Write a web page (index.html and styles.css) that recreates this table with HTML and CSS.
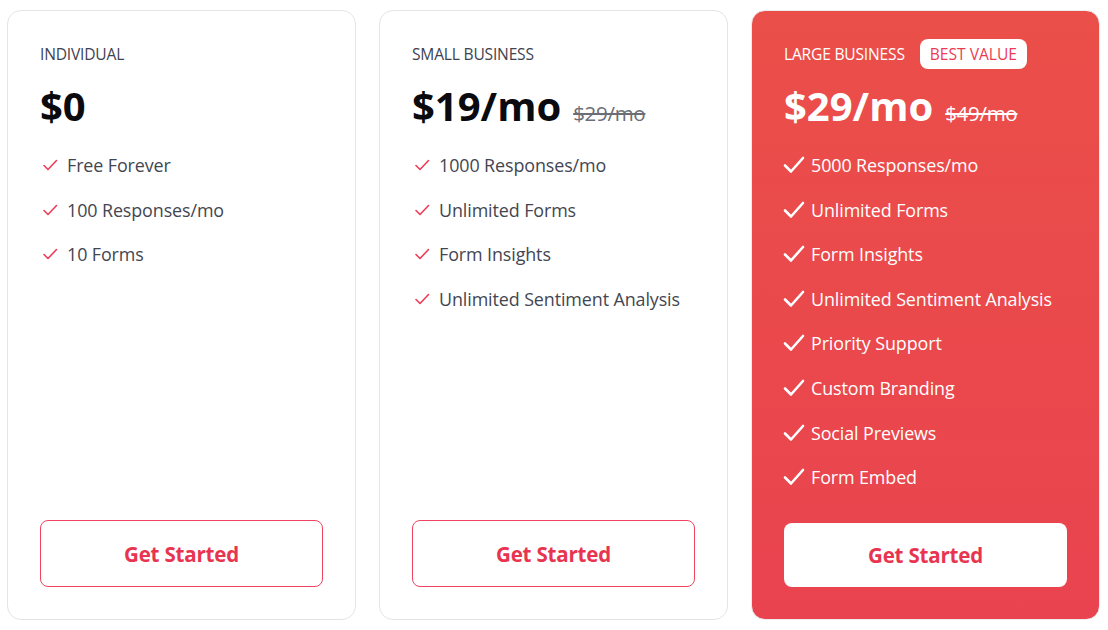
FILE: index.html
```html
<!DOCTYPE html>
<html>
<head>
<meta charset="utf-8">
<link rel="stylesheet" href="styles.css">
</head>
<body>
<div class="plans">
  <div class="card">
    <div class="head"><span class="name">INDIVIDUAL</span></div>
    <div class="price"><span class="now">$0</span></div>
    <ul class="features">
      <li><svg class="chk" viewBox="0 0 16 16"><path d="M2 8.5 L6 12.5 L14.5 3.5"/></svg>Free Forever</li>
      <li><svg class="chk" viewBox="0 0 16 16"><path d="M2 8.5 L6 12.5 L14.5 3.5"/></svg>100 Responses/mo</li>
      <li><svg class="chk" viewBox="0 0 16 16"><path d="M2 8.5 L6 12.5 L14.5 3.5"/></svg>10 Forms</li>
    </ul>
    <button class="btn">Get Started</button>
  </div>
  <div class="card">
    <div class="head"><span class="name">SMALL BUSINESS</span></div>
    <div class="price"><span class="now">$19/mo</span><s class="was">$29/mo</s></div>
    <ul class="features">
      <li><svg class="chk" viewBox="0 0 16 16"><path d="M2 8.5 L6 12.5 L14.5 3.5"/></svg>1000 Responses/mo</li>
      <li><svg class="chk" viewBox="0 0 16 16"><path d="M2 8.5 L6 12.5 L14.5 3.5"/></svg>Unlimited Forms</li>
      <li><svg class="chk" viewBox="0 0 16 16"><path d="M2 8.5 L6 12.5 L14.5 3.5"/></svg>Form Insights</li>
      <li><svg class="chk" viewBox="0 0 16 16"><path d="M2 8.5 L6 12.5 L14.5 3.5"/></svg>Unlimited Sentiment Analysis</li>
    </ul>
    <button class="btn">Get Started</button>
  </div>
  <div class="card featured">
    <div class="head"><span class="name">LARGE BUSINESS</span><span class="badge">BEST VALUE</span></div>
    <div class="price"><span class="now">$29/mo</span><s class="was">$49/mo</s></div>
    <ul class="features">
      <li><svg class="chk" viewBox="0 0 22 22"><path d="M2 11.5 L8 17.5 L20 4"/></svg>5000 Responses/mo</li>
      <li><svg class="chk" viewBox="0 0 22 22"><path d="M2 11.5 L8 17.5 L20 4"/></svg>Unlimited Forms</li>
      <li><svg class="chk" viewBox="0 0 22 22"><path d="M2 11.5 L8 17.5 L20 4"/></svg>Form Insights</li>
      <li><svg class="chk" viewBox="0 0 22 22"><path d="M2 11.5 L8 17.5 L20 4"/></svg>Unlimited Sentiment Analysis</li>
      <li><svg class="chk" viewBox="0 0 22 22"><path d="M2 11.5 L8 17.5 L20 4"/></svg>Priority Support</li>
      <li><svg class="chk" viewBox="0 0 22 22"><path d="M2 11.5 L8 17.5 L20 4"/></svg>Custom Branding</li>
      <li><svg class="chk" viewBox="0 0 22 22"><path d="M2 11.5 L8 17.5 L20 4"/></svg>Social Previews</li>
      <li><svg class="chk" viewBox="0 0 22 22"><path d="M2 11.5 L8 17.5 L20 4"/></svg>Form Embed</li>
    </ul>
    <button class="btn">Get Started</button>
  </div>
</div>
</body>
</html>
```
FILE: styles.css
```css
* { box-sizing: border-box; }
html, body { margin: 0; background: #ffffff; }
body {
  padding: 10px 0 0 7px;
  font-family: "Open Sans", "Noto Sans", sans-serif;
  color: #3c3f48;
}
.plans {
  display: grid;
  grid-template-columns: 349px 349px 349px;
  gap: 23px;
}
.card {
  height: 610px;
  border: 1px solid #e4e4e6;
  border-radius: 14px;
  background: #ffffff;
  padding: 28px 32px 32px 32px;
  display: flex;
  flex-direction: column;
}
.head {
  height: 30px;
  display: flex;
  align-items: center;
  gap: 15px;
}
.name {
  font-size: 15.6px;
  letter-spacing: -0.2px;
  color: #3f4350;
}
.badge {
  background: #fff;
  color: #ec3a55;
  font-size: 15.6px;
  height: 30px;
  line-height: 30px;
  padding: 0 10px;
  border-radius: 8px;
}
.price {
  margin-top: 15px;
  height: 44px;
  display: flex;
  align-items: baseline;
  gap: 12px;
}
.now {
  font-size: 40px;
  line-height: 44px;
  font-weight: 700;
  color: #0b0b0f;
  letter-spacing: 0;
}
.was {
  font-size: 20.5px;
  color: #6b6e76;
  letter-spacing: -0.3px;
}
.features {
  list-style: none;
  margin: 25px 0 0 0;
  padding: 0;
  display: flex;
  flex-direction: column;
  gap: 20.6px;
}
.features li {
  display: flex;
  align-items: center;
  height: 24px;
  font-size: 17.9px;
  color: #434651;
  letter-spacing: -0.1px;
}
.chk {
  width: 16px;
  height: 16px;
  margin: 0 9px 0 2px;
  fill: none;
  stroke: #ee3c58;
  stroke-width: 1.6;
  stroke-linecap: round;
  stroke-linejoin: round;
  flex: none;
}
.btn {
  margin-top: auto;
  height: 67px;
  width: 100%;
  border: 1.5px solid #ee4460;
  border-radius: 8px;
  background: #fff;
  color: #e8344f;
  font-family: inherit;
  font-size: 20.5px;
  font-weight: 700;
  letter-spacing: -0.2px;
}
.featured {
  background: linear-gradient(180deg, #eb4f49 0%, #e9434f 100%);
  border-color: #ececec;
}
.featured .name, .featured .now, .featured .features li { color: #ffffff; }
.featured .was { color: #ffffff; }
.featured .chk {
  width: 22px;
  height: 22px;
  margin: 0 6px 0 -1px;
  stroke: #ffffff;
  stroke-width: 2.6;
}
.featured .btn {
  border: none;
  height: 64px;
  margin-bottom: 0;
}
```
